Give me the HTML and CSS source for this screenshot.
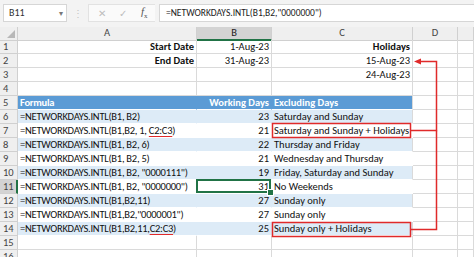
FILE: index.html
```html
<!DOCTYPE html>
<html>
  <head>
    <meta charset="utf-8" />
    <title>NETWORKDAYS.INTL</title>
    <link rel="stylesheet" href="styles.css">
  </head>
  <body>
    <div class="toolbar">
      <div class="namebox">B11<span class="drop">&#9662;</span></div>
      <div class="grip">&#8942;</div>
      <div class="buttons">
        <span class="btn x">&#10005;</span>
        <span class="btn ok">&#10003;</span>
        <span class="btn fx"><i>f</i><sub>x</sub></span>
      </div>
      <div class="formula">=NETWORKDAYS.INTL(B1,B2,"0000000")</div>
    </div>

    <div class="sheet">
      <div class="row head">
        <div class="cell corner"></div>
        <div class="cell colh">A</div>
        <div class="cell colh sel">B</div>
        <div class="cell colh">C</div>
        <div class="cell colh">D</div>
        <div class="cell colh last"></div>
      </div>

      <div class="row">
        <div class="cell rowh">1</div>
        <div class="cell r b">Start Date</div>
        <div class="cell r">1-Aug-23</div>
        <div class="cell r b">Holidays</div>
        <div class="cell"></div><div class="cell"></div>
      </div>
      <div class="row">
        <div class="cell rowh">2</div>
        <div class="cell r b">End Date</div>
        <div class="cell r">31-Aug-23</div>
        <div class="cell r">15-Aug-23</div>
        <div class="cell"></div><div class="cell"></div>
      </div>
      <div class="row">
        <div class="cell rowh">3</div>
        <div class="cell"></div><div class="cell"></div>
        <div class="cell r">24-Aug-23</div>
        <div class="cell"></div><div class="cell"></div>
      </div>
      <div class="row">
        <div class="cell rowh">4</div>
        <div class="cell"></div><div class="cell"></div><div class="cell"></div>
        <div class="cell"></div><div class="cell"></div>
      </div>
      <div class="row thead">
        <div class="cell rowh">5</div>
        <div class="cell t">Formula</div>
        <div class="cell t r">Working Days</div>
        <div class="cell t">Excluding Days</div>
        <div class="cell"></div><div class="cell"></div>
      </div>
      <div class="row band">
        <div class="cell rowh">6</div>
        <div class="cell t">=NETWORKDAYS.INTL(B1, B2)</div>
        <div class="cell t r">23</div>
        <div class="cell t">Saturday and Sunday</div>
        <div class="cell"></div><div class="cell"></div>
      </div>
      <div class="row">
        <div class="cell rowh">7</div>
        <div class="cell t">=NETWORKDAYS.INTL(B1,B2, 1, <span class="ref">C2:C3</span>)</div>
        <div class="cell t r">21</div>
        <div class="cell t">Saturday and Sunday + Holidays</div>
        <div class="cell"></div><div class="cell"></div>
      </div>
      <div class="row band">
        <div class="cell rowh">8</div>
        <div class="cell t">=NETWORKDAYS.INTL(B1, B2, 6)</div>
        <div class="cell t r">22</div>
        <div class="cell t">Thursday and Friday</div>
        <div class="cell"></div><div class="cell"></div>
      </div>
      <div class="row">
        <div class="cell rowh">9</div>
        <div class="cell t">=NETWORKDAYS.INTL(B1, B2, 5)</div>
        <div class="cell t r">21</div>
        <div class="cell t">Wednesday and Thursday</div>
        <div class="cell"></div><div class="cell"></div>
      </div>
      <div class="row band">
        <div class="cell rowh">10</div>
        <div class="cell t">=NETWORKDAYS.INTL(B1, B2, "0000111")</div>
        <div class="cell t r">19</div>
        <div class="cell t">Friday, Saturday and Sunday</div>
        <div class="cell"></div><div class="cell"></div>
      </div>
      <div class="row">
        <div class="cell rowh sel">11</div>
        <div class="cell t">=NETWORKDAYS.INTL(B1, B2, "0000000")</div>
        <div class="cell t r active">31</div>
        <div class="cell t">No Weekends</div>
        <div class="cell"></div><div class="cell"></div>
      </div>
      <div class="row band">
        <div class="cell rowh">12</div>
        <div class="cell t">=NETWORKDAYS.INTL(B1,B2,11)</div>
        <div class="cell t r">27</div>
        <div class="cell t">Sunday only</div>
        <div class="cell"></div><div class="cell"></div>
      </div>
      <div class="row">
        <div class="cell rowh">13</div>
        <div class="cell t">=NETWORKDAYS.INTL(B1,B2,"0000001")</div>
        <div class="cell t r">27</div>
        <div class="cell t">Sunday only</div>
        <div class="cell"></div><div class="cell"></div>
      </div>
      <div class="row band">
        <div class="cell rowh">14</div>
        <div class="cell t">=NETWORKDAYS.INTL(B1,B2,11,<span class="ref">C2:C3</span>)</div>
        <div class="cell t r">25</div>
        <div class="cell t">Sunday only + Holidays</div>
        <div class="cell"></div><div class="cell"></div>
      </div>
      <div class="row">
        <div class="cell rowh">15</div>
        <div class="cell"></div><div class="cell"></div><div class="cell"></div>
        <div class="cell"></div><div class="cell"></div>
      </div>
      <div class="row">
        <div class="cell rowh">16</div>
        <div class="cell"></div><div class="cell"></div><div class="cell"></div>
        <div class="cell"></div><div class="cell"></div>
      </div>

      <!-- annotation: holidays range feeds rows 7 and 14 -->
      <svg class="marks" width="474" height="230" viewBox="0 27 474 230">
        <g fill="none" stroke="#e02a2a" stroke-width="1.5">
          <rect x="272.5" y="123.5" width="138" height="14" />
          <rect x="272.5" y="222.5" width="138" height="14" />
          <polyline points="411,130.5 436.5,130.5 436.5,61.5 420,61.5" />
          <polyline points="411,229.5 436.5,229.5 436.5,130.5" />
        </g>
        <polygon points="414,61.5 421,58.5 421,64.5" fill="#e02a2a" />
      </svg>
    </div>
  </body>
</html>
```

FILE: styles.css
```css
body {
  margin: 0;
  font-family: Carlito, "Liberation Sans Narrow", "Liberation Sans", sans-serif;
  font-size: 10.5px;
  color: #111;
  background: #fff;
  overflow: hidden;
}

/* formula bar strip */
.toolbar {
  display: flex;
  align-items: center;
  height: 27px;
  background: #f3f3f3;
  padding: 0 0 1px 3px;
  box-sizing: border-box;
}

.namebox {
  position: relative;
  width: 64px;
  height: 18px;
  box-sizing: border-box;
  background: #fff;
  border: 1px solid #d6d6d6;
  padding-left: 5px;
  line-height: 16px;
  font-size: 10px;
  color: #333;
}

.drop {
  position: absolute;
  right: 3px;
  top: 0;
  font-size: 8px;
  color: #777;
}

.grip {
  width: 21px;
  text-align: center;
  color: #c4c4c4;
  font-size: 10px;
}

.buttons {
  display: flex;
  align-items: center;
  width: 67px;
  height: 18px;
  box-sizing: border-box;
  background: #fafafa;
  border: 1px solid #e2e2e2;
  border-right: 0;
}

.btn {
  width: 22px;
  text-align: center;
  color: #bdbdbd;
  font-size: 10px;
}

.btn.x {
  margin-left: 2px;
}

.btn.fx {
  color: #555;
  font-family: "Liberation Serif", serif;
  font-size: 11px;
}

.btn.fx sub {
  font-size: 7px;
}

.formula {
  flex: 1;
  height: 18px;
  margin-left: 4px;
  box-sizing: border-box;
  background: #fff;
  border: 1px solid #d6d6d6;
  border-right: 0;
  padding-left: 6px;
  line-height: 16px;
  font-size: 9.5px;
  color: #222;
  white-space: nowrap;
}

/* grid */
.sheet {
  position: relative;
}

.row {
  display: grid;
  grid-template-columns: 18px 179px 75px 141px 45px 16px;
  height: 14px;
}

.cell {
  box-sizing: border-box;
  border-right: 1px solid #dadada;
  border-bottom: 1px solid #dadada;
  padding: 0 2px;
  line-height: 13px;
  white-space: nowrap;
  overflow: visible;
}

.cell.t:nth-child(2) {
  letter-spacing: -0.25px;
}

.head {
  height: 13px;
}

.head .cell {
  background: #efefef;
  border-color: #d0d0d0;
  text-align: center;
  line-height: 12px;
  color: #444;
}

.colh.sel {
  background: #d3d3d3;
  border-bottom: 2px solid #217346;
  color: #222;
}

.corner {
  position: relative;
}

.corner::after {
  content: "";
  position: absolute;
  right: 2px;
  bottom: 2px;
  border-left: 8px solid transparent;
  border-bottom: 8px solid #b8b8b8;
}

.rowh {
  background: #efefef;
  border-color: #d0d0d0;
  color: #444;
  padding-left: 3px;
}

.rowh.sel {
  background: #d3d3d3;
  border-right: 2px solid #217346;
}

.r {
  text-align: right;
}

.b {
  font-weight: bold;
}

/* table styling */
.thead .t {
  background: #5b9bd5;
  color: #fff;
  font-weight: bold;
  border-right-color: #5b9bd5;
  border-bottom-color: #fff;
}

.band .t {
  background: #ddebf7;
  border-right-color: #ddebf7;
  border-bottom-color: #fff;
}

.row:not(.band):not(.thead) .t {
  border-right-color: #fff;
  border-bottom-color: #fff;
}

.thead .t:nth-child(4),
.row .t:nth-child(4) {
  border-right-color: #dadada;
}

.ref {
  text-decoration: underline;
  text-decoration-color: #e02a2a;
  text-underline-offset: 2px;
}

.active {
  position: relative;
}

.active::before {
  content: "";
  position: absolute;
  left: -1px;
  top: -1px;
  right: 0;
  bottom: 0;
  border: 2px solid #217346;
}

.active::after {
  content: "";
  position: absolute;
  right: -3px;
  bottom: -3px;
  width: 5px;
  height: 5px;
  background: #217346;
  border: 1px solid #fff;
}

.marks {
  position: absolute;
  left: 0;
  top: 0;
  pointer-events: none;
}
```
